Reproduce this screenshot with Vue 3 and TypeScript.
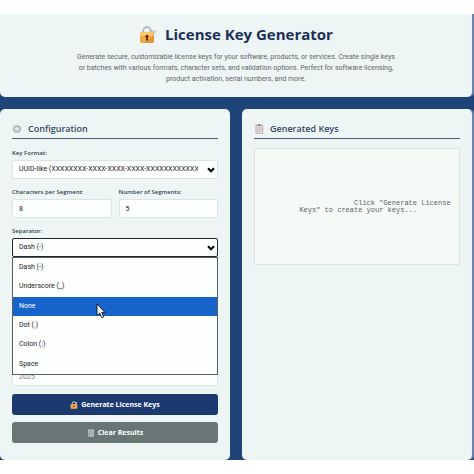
<script setup lang="ts">
import { ref } from 'vue'

interface Choice {
  value: string
  label: string
}

const separators: Choice[] = [
  { value: 'dash', label: 'Dash (-)' },
  { value: 'underscore', label: 'Underscore (_)' },
  { value: 'none', label: 'None' },
  { value: 'dot', label: 'Dot (.)' },
  { value: 'colon', label: 'Colon (:)' },
  { value: 'space', label: 'Space' },
]

const format = ref('uuid')
const charsPerSegment = ref('8')
const segmentCount = ref('5')
const separator = ref('dash')
const highlighted = ref('none')
const menuOpen = ref(true)
const year = ref('')
const placeholder = ' '.repeat(13) + 'Click "Generate License\nKeys" to create your keys...'
const output = ref(placeholder)

function choose(value: string): void {
  separator.value = value
  menuOpen.value = false
}

function generate(): void {
  const pool = 'ABCDEFGHJKLMNPQRSTUVWXYZ23456789'
  const marks: Record<string, string> = { dash: '-', underscore: '_', none: '', dot: '.', colon: ':', space: ' ' }
  const segment = () =>
    Array.from({ length: Number(charsPerSegment.value) }, () => pool[Math.floor(Math.random() * pool.length)]).join('')
  output.value = Array.from({ length: Number(segmentCount.value) }, segment).join(marks[separator.value])
}

function clearResults(): void {
  output.value = placeholder
}
</script>

<template>
  <div class="page">
    <header class="hero">
      <h1>
        <svg class="lock" viewBox="0 0 18 18" aria-hidden="true">
          <path d="M10 4.500h7.500L14 11z" fill="#c3c8d6" />
          <path d="M4.200 8V5a3.800 3.800 0 0 1 7.600 0v3" fill="none" stroke="#b9b3b2" stroke-width="1.800" />
          <rect x="1" y="6" width="14" height="11" rx="1.800" fill="#f0a848" />
          <rect x="1" y="6" width="14" height="4" rx="1.800" fill="#f8c868" />
          <path d="M15 9v6.200a1.800 1.800 0 0 1-1.800 1.800H5z" fill="#dd8528" opacity=".6" />
          <circle cx="8" cy="10.300" r="1.600" fill="#5a2c20" />
          <path d="M7.300 11h1.400l.3 3.600H7z" fill="#5a2c20" />
        </svg>
        <span>License Key Generator</span>
      </h1>
      <p>
        Generate secure, customizable license keys for your software, products, or services. Create single keys or
        batches with various formats, character sets, and validation options. Perfect for software licensing, product
        activation, serial numbers, and more.
      </p>
    </header>

    <main class="columns">
      <section class="card">
        <h2>
          <svg class="icon" viewBox="0 0 10 10" aria-hidden="true">
            <circle cx="5" cy="5" r="3.900" fill="none" stroke="#c0c6ca" stroke-width="1.400" stroke-dasharray="1.500 .95" />
            <circle cx="5" cy="5" r="2.700" fill="none" stroke="#a6adb2" stroke-width="1.200" />
            <circle cx="5" cy="5" r="1" fill="#dde2e5" />
          </svg>
          <span>Configuration</span>
        </h2>

        <div class="field">
          <label for="format">Key Format:</label>
          <div class="select">
            <select id="format" v-model="format">
              <option value="uuid">UUID-like (XXXXXXXX-XXXX-XXXX-XXXX-XXXXXXXXXXXX)</option>
            </select>
            <svg class="chevron" viewBox="0 0 8 6" aria-hidden="true"><path d="M1 1.300l3 3 3-3" /></svg>
          </div>
        </div>

        <div class="pair">
          <div class="field">
            <label for="chars">Characters per Segment:</label>
            <input id="chars" v-model="charsPerSegment" type="text" inputmode="numeric" />
          </div>
          <div class="field">
            <label for="segments">Number of Segments:</label>
            <input id="segments" v-model="segmentCount" type="text" inputmode="numeric" />
          </div>
        </div>

        <div class="field">
          <label for="separator">Separator:</label>
          <div class="select">
            <select id="separator" v-model="separator" class="active">
              <option v-for="s in separators" :key="s.value" :value="s.value">{{ s.label }}</option>
            </select>
            <svg class="chevron" viewBox="0 0 8 6" aria-hidden="true"><path d="M1 1.300l3 3 3-3" /></svg>
            <ul v-if="menuOpen" class="menu" role="listbox" aria-label="Separator">
              <li
                v-for="s in separators"
                :key="s.value"
                role="option"
                :aria-selected="s.value === separator"
                :class="{ on: s.value === highlighted }"
                @mouseenter="highlighted = s.value"
                @click="choose(s.value)"
              >
                {{ s.label }}
                <svg v-if="s.value === highlighted" class="cursor" viewBox="0 0 10 16" aria-hidden="true">
                  <path d="M1 1v11.500l2.700-2.400 2 4.600 2-.9-2-4.400H9z" />
                </svg>
              </li>
            </ul>
          </div>
        </div>

        <input v-model="year" class="year" type="text" placeholder="2025" aria-label="Year" />

        <button class="primary" type="button" @click="generate">
          <svg class="mini" viewBox="0 0 8 8" aria-hidden="true">
            <path d="M2.300 3.500V2.200a1.600 1.600 0 0 1 3.200 0v1.300" fill="none" stroke="#c9c2b5" stroke-width="1" />
            <path d="M5.500 1h2L6.500 3z" fill="#b9bed0" />
            <rect x=".5" y="3" width="6.800" height="4.700" rx=".8" fill="#e8ad4e" />
            <path d="M3.400 4.300h1v2h-1z" fill="#5a2c20" />
          </svg>
          <span>Generate License Keys</span>
        </button>
        <button class="secondary" type="button" @click="clearResults">
          <svg class="mini" viewBox="0 0 8 8" aria-hidden="true">
            <path d="M1 .5h6.200L6.700 7.700H1.500z" fill="#c4cccc" />
            <path d="M2.700 1v6.200M4.100 1v6.200M5.500 1v6.200M1.200 2.800h5.700M1.400 5h5.300" stroke="#8f9b9b" stroke-width=".5" />
          </svg>
          <span>Clear Results</span>
        </button>
      </section>

      <section class="card edge">
        <h2>
          <svg class="icon" viewBox="0 0 10 10" aria-hidden="true">
            <rect x="1.500" y=".8" width="7.600" height="9" rx=".6" fill="#c3a39c" />
            <rect x="2.400" y="1.800" width="5.800" height="7.200" fill="#e3dfe3" />
            <rect x="3.700" y="0" width="3.200" height="2" rx=".5" fill="#8b939b" />
            <path d="M3.300 4h4M3.300 5.700h4M3.300 7.400h2.500" stroke="#a9a5ad" stroke-width=".6" />
          </svg>
          <span>Generated Keys</span>
        </h2>
        <div class="output"><pre>{{ output }}</pre></div>
      </section>
    </main>
  </div>
</template>

<style>
body {
  margin: 0;
  padding: 14px 0;
  background: #fff;
}
</style>

<style scoped>
* {
  box-sizing: border-box;
}

.page {
  padding-right: 2px;
  background: #1f4478;
  font-family: 'Open Sans', 'Noto Sans', sans-serif;
}

.hero {
  padding: 10px 24px 12px;
  border-radius: 0 0 5px 5px;
  background: #edf5f5;
  box-shadow: 2px 0 #6a84ab;
  text-align: center;
}

h1 {
  display: flex;
  align-items: center;
  justify-content: center;
  gap: 8px;
  margin: 0 0 7px;
  color: #1c2f57;
  font-size: 15px;
  font-weight: 700;
  line-height: 21px;
}

.lock {
  width: 18px;
  height: 18px;
}

.hero p {
  max-width: 322px;
  margin: 0 auto;
  color: #5f6868;
  font-family: Roboto, 'Open Sans', sans-serif;
  font-size: 7px;
  line-height: 11px;
}

.columns {
  display: grid;
  grid-template-columns: 1fr 1fr;
  gap: 12px;
  margin-top: 12px;
}

.card {
  min-width: 0;
  padding: 13px 12px 17px;
  border-radius: 5px;
  background: #edf5f5;
}

.edge {
  box-shadow: 2px 0 #6a84ab;
}

h2 {
  display: flex;
  align-items: center;
  gap: 6px;
  margin: 0 0 9px;
  padding-bottom: 2px;
  border-bottom: 1px solid #4a5f70;
  color: #34495e;
  font-size: 9px;
  font-weight: 600;
  line-height: 14px;
}

.icon {
  width: 10px;
  height: 10px;
}

.field {
  margin-bottom: 8px;
}

label {
  display: block;
  margin-bottom: 2px;
  color: #34444f;
  font-size: 6px;
  font-weight: 600;
  line-height: 10px;
}

.pair {
  display: grid;
  grid-template-columns: 1fr 1fr;
  gap: 7px;
}

input,
select {
  display: block;
  width: 100%;
  height: 19px;
  padding: 0 6px;
  border: 1px solid #dde3e5;
  border-radius: 2px;
  outline: none;
  appearance: none;
  background: #fdfefe;
  color: #222;
  font: 7px/17px Roboto, 'Liberation Sans', sans-serif;
}

select {
  padding-right: 19px;
}

select.active {
  border-color: #22262b;
}

.select {
  position: relative;
}

.chevron {
  position: absolute;
  top: 7px;
  right: 3px;
  width: 8px;
  height: 6px;
  fill: none;
  stroke: #000;
  stroke-width: 2;
  pointer-events: none;
}

.menu {
  position: absolute;
  z-index: 2;
  top: 100%;
  right: 0;
  left: 0;
  display: grid;
  grid-template-rows: repeat(6, 1fr);
  height: 118px;
  margin: 0;
  padding: 0;
  border: 1px solid #5a5f63;
  background: #fdfefe;
  list-style: none;
}

.menu li {
  position: relative;
  display: flex;
  align-items: center;
  padding: 0 6px;
  color: #222;
  font: 7px/19px Roboto, 'Liberation Sans', sans-serif;
}

.menu .on {
  background: #1765cb;
  color: #fff;
}

.cursor {
  position: absolute;
  top: 6px;
  left: 83px;
  z-index: 3;
  width: 10px;
  height: 16px;
  fill: #fff;
  stroke: #15202c;
  stroke-width: 1;
}

.year {
  margin: 110px 0 8px;
}

.year::placeholder {
  color: #7b8084;
  opacity: 1;
}

button {
  display: flex;
  align-items: center;
  justify-content: center;
  gap: 3px;
  width: 100%;
  height: 21px;
  padding: 0;
  border: 0;
  border-radius: 3px;
  color: #fff;
  font: 700 7px/10px 'Open Sans', 'Noto Sans', sans-serif;
}

button + button {
  margin-top: 7px;
}

.primary {
  background: #1c3a70;
}

.secondary {
  background: #697676;
}

.mini {
  width: 8px;
  height: 8px;
}

.output {
  display: flex;
  align-items: center;
  justify-content: center;
  height: 117px;
  padding: 8px 8px 8px 44px;
  border: 1px solid #dbe2df;
  border-radius: 2px;
  background: #f6faf6;
}

pre {
  margin: 0;
  color: #5c6262;
  font: 7px/7px 'Liberation Mono', 'Courier New', monospace;
}
</style>
